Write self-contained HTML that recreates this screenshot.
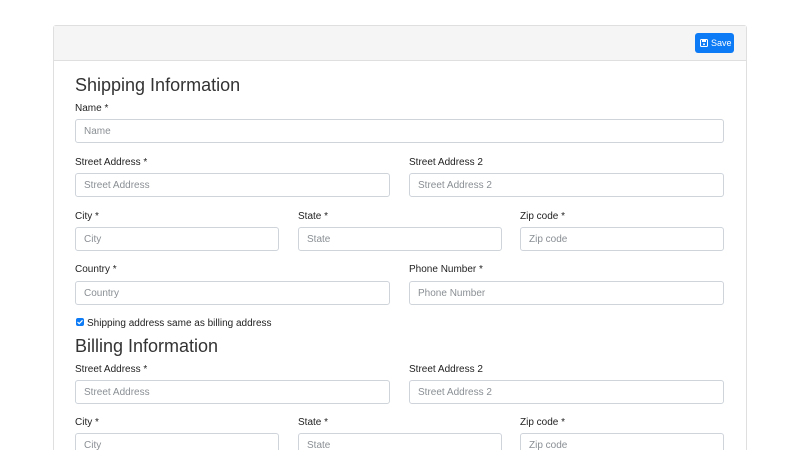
<!DOCTYPE html>
<html style="width:800px;height:450px;overflow:hidden"><head><style>
body{margin:0;width:800px;height:450px;overflow:hidden;background:#fff;font-family:"Liberation Sans",sans-serif;color:#212529;position:relative}
.card{position:absolute;left:53px;top:25px;width:692px;height:430px;border:1px solid #dfdfdf;border-radius:3px}
.hdr{position:absolute;left:54px;top:26px;width:692px;height:34px;background:#f5f5f5;border-bottom:1px solid #dfdfdf}
.btn{position:absolute;left:695px;top:33px;width:39px;height:20px;background:#0d7bf5;border-radius:3px;color:#fff;font-size:9px;line-height:20px;box-sizing:border-box;padding-left:16px}
.btn svg{position:absolute;left:5px;top:6px}
.h{position:absolute;left:75px;font-size:18px;color:#333}
.l{position:absolute;font-size:10px;color:#222;margin-top:2px}
.i{position:absolute;height:22px;border:1px solid #ced4da;border-radius:3px;font-size:10px;color:#8a8f94;line-height:24px;padding-left:8px;box-sizing:content-box}
</style></head><body>
<div class="card"></div><div class="hdr"></div>
<div class="btn"><svg width="8" height="8" viewBox="0 0 8 8"><rect x=".5" y=".5" width="7" height="7" rx="1" fill="none" stroke="#fff"/><rect x="2" y="1" width="4" height="2" fill="#fff"/><circle cx="4" cy="5.2" r="1" fill="#fff"/></svg>Save</div>
<div class="h" style="top:75px">Shipping Information</div>
<div class="l" style="left:75px;top:101px">Name *</div>
<div class="i" style="left:75px;top:119px;width:639px">Name</div>
<div class="l" style="left:75px;top:155px">Street Address *</div>
<div class="l" style="left:409px;top:155px">Street Address 2</div>
<div class="i" style="left:75px;top:173px;width:305px">Street Address</div>
<div class="i" style="left:409px;top:173px;width:305px">Street Address 2</div>
<div class="l" style="left:75px;top:209px">City *</div>
<div class="l" style="left:298px;top:209px">State *</div>
<div class="l" style="left:520px;top:209px">Zip code *</div>
<div class="i" style="left:75px;top:227px;width:194px">City</div>
<div class="i" style="left:298px;top:227px;width:194px">State</div>
<div class="i" style="left:520px;top:227px;width:194px">Zip code</div>
<div class="l" style="left:75px;top:262px">Country *</div>
<div class="l" style="left:409px;top:262px">Phone Number *</div>
<div class="i" style="left:75px;top:281px;width:305px">Country</div>
<div class="i" style="left:409px;top:281px;width:305px">Phone Number</div>
<div style="position:absolute;left:76px;top:318px;width:8px;height:8px;background:#0d7bf5;border-radius:2px"><svg width="8" height="8" viewBox="0 0 8 8" style="position:absolute;left:0;top:0"><path d="M1.5 4l1.7 1.7L6.5 2.3" stroke="#fff" stroke-width="1.2" fill="none"/></svg></div>
<div class="l" style="left:87px;top:316px">Shipping address same as billing address</div>
<div class="h" style="top:336px">Billing Information</div>
<div class="l" style="left:75px;top:362px">Street Address *</div>
<div class="l" style="left:409px;top:362px">Street Address 2</div>
<div class="i" style="left:75px;top:380px;width:305px">Street Address</div>
<div class="i" style="left:409px;top:380px;width:305px">Street Address 2</div>
<div class="l" style="left:75px;top:415px">City *</div>
<div class="l" style="left:298px;top:415px">State *</div>
<div class="l" style="left:520px;top:415px">Zip code *</div>
<div class="i" style="left:75px;top:433px;width:194px">City</div>
<div class="i" style="left:298px;top:433px;width:194px">State</div>
<div class="i" style="left:520px;top:433px;width:194px">Zip code</div>
</body></html>
